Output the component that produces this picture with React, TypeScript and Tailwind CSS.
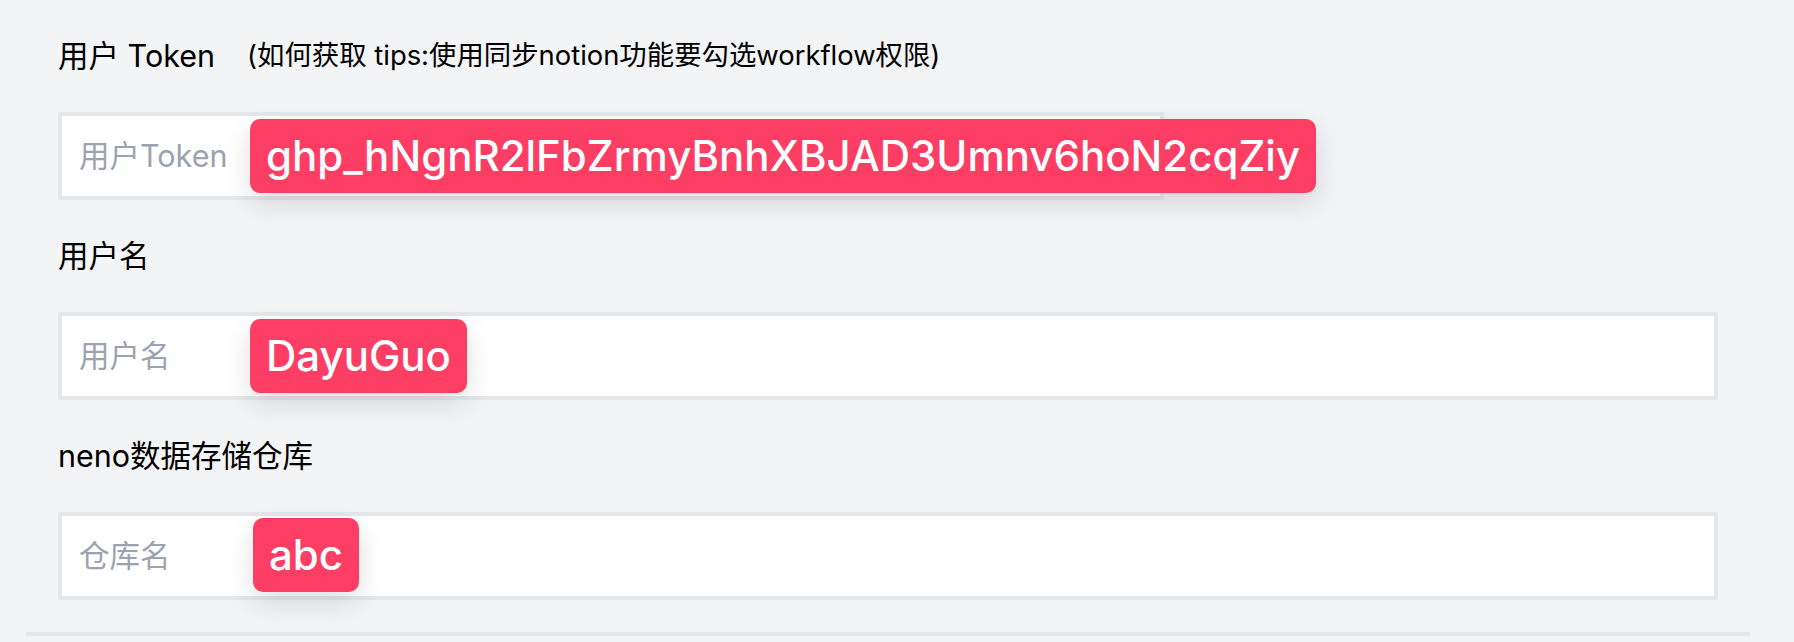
import React from "react";

const FONT = "font-['Inter','Noto_Sans_CJK_SC',sans-serif]";

function Badge({ text, left, top }: { text: string; left: string; top: string }) {
  return (
    <div
      className={`absolute ${left} ${top} h-[74px] flex items-center px-[16px] rounded-[10px] bg-[#fc3d64] text-white text-[42px] font-medium leading-none whitespace-nowrap shadow-[0_10px_28px_rgba(0,0,0,0.13)]`}
    >
      {text}
    </div>
  );
}

export default function App() {
  return (
    <div className={`min-h-screen w-full bg-[#f3f4f6] pl-[26px] pr-[44px] ${FONT}`}>
      <div className="border-b-4 border-[#e5e7eb] px-8 pt-[34px] pb-8 flex flex-col gap-[34px]">
        <section className="flex flex-col gap-[34px]">
          <div className="h-[44px] flex items-center text-black">
            <span className="text-[30.5px]">用户 Token</span>
            <span className="text-[27.4px] ml-[32px]">(如何获取 tips:使用同步notion功能要勾选workflow权限)</span>
          </div>
          <div className="relative w-[1106px] h-[88px] border-4 border-[#e5e7eb] bg-white flex items-center pl-[17px]">
            <span className="text-[30.5px] text-[#9ca3af]">用户Token</span>
            <Badge text="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" left="left-[188px]" top="top-[3px]" />
          </div>
        </section>
        <section className="flex flex-col gap-[34px]">
          <div className="h-[44px] flex items-center text-black">
            <span className="text-[30.5px]">用户名</span>
          </div>
          <div className="relative w-full h-[88px] border-4 border-[#e5e7eb] bg-white flex items-center pl-[17px]">
            <span className="text-[30.5px] text-[#9ca3af]">用户名</span>
            <Badge text="DayuGuo" left="left-[188px]" top="top-[3px]" />
          </div>
        </section>
        <section className="flex flex-col gap-[34px]">
          <div className="h-[44px] flex items-center text-black">
            <span className="text-[30.5px]">neno数据存储仓库</span>
          </div>
          <div className="relative w-full h-[88px] border-4 border-[#e5e7eb] bg-white flex items-center pl-[17px]">
            <span className="text-[30.5px] text-[#9ca3af]">仓库名</span>
            <Badge text="abc" left="left-[191px]" top="top-[2px]" />
          </div>
        </section>
      </div>
    </div>
  );
}
